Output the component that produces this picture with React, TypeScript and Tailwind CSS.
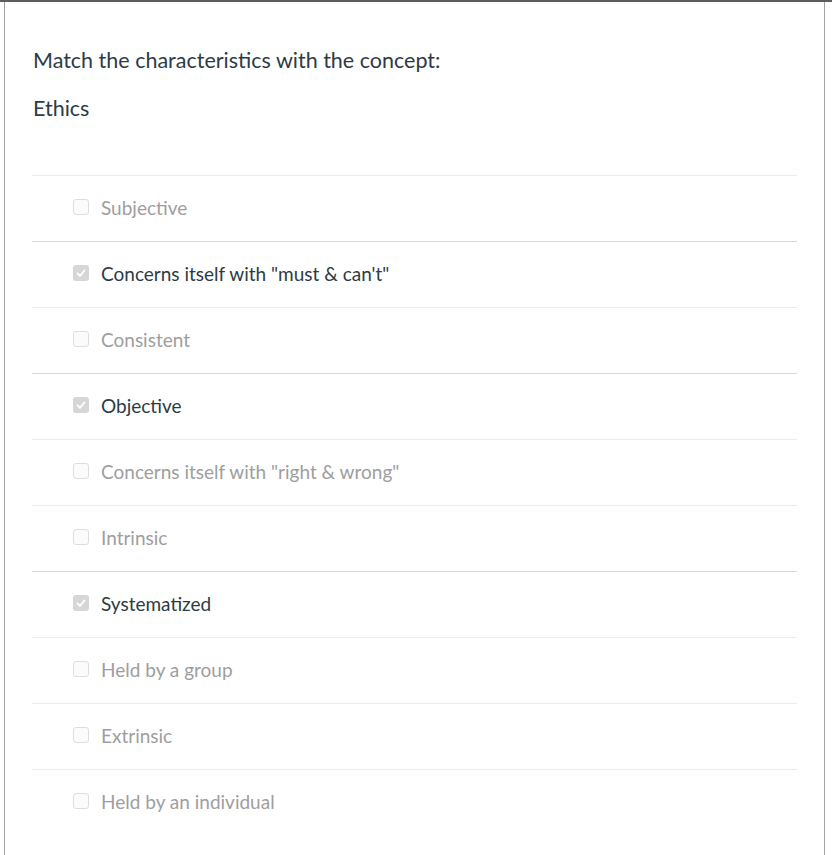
import React from "react";

const items: { label: string; checked: boolean }[] = [
  { label: "Subjective", checked: false },
  { label: 'Concerns itself with "must & can\'t"', checked: true },
  { label: "Consistent", checked: false },
  { label: "Objective", checked: true },
  { label: 'Concerns itself with "right & wrong"', checked: false },
  { label: "Intrinsic", checked: false },
  { label: "Systematized", checked: true },
  { label: "Held by a group", checked: false },
  { label: "Extrinsic", checked: false },
  { label: "Held by an individual", checked: false },
];

function Box({ checked }: { checked: boolean }) {
  if (checked) {
    return (
      <span className="flex h-[16px] w-[16px] items-center justify-center rounded-[3px] bg-[#d6d6d6]">
        <svg width="12" height="12" viewBox="0 0 12 12" fill="none">
          <path d="M2.5 6.3 L5 8.8 L9.6 3.4" stroke="#ffffff" strokeWidth="1.8" strokeLinecap="round" strokeLinejoin="round" />
        </svg>
      </span>
    );
  }
  return <span className="block h-[16px] w-[16px] rounded-[3px] border border-[#dedede] bg-[#fbfbfb]" />;
}

export default function App() {
  return (
    <div className="min-h-[855px] bg-white" style={{ fontFamily: "Lato, 'Noto Sans', sans-serif" }}>
      <div className="h-[2px] w-full bg-[#5e5e61]" />
      <div className="ml-[4px] min-h-[853px] w-[821px] border-x border-[#a3a3a3] px-[27px]">
        <p className="pl-[1px] pt-[42px] text-[21.5px] leading-[33px] text-[#2d3b45]">
          Match the characteristics with the concept:
        </p>
        <p className="mt-[15px] pl-[1px] text-[21.5px] leading-[33px] text-[#2d3b45]">Ethics</p>
        <ul className="mt-[50px]">
          {items.map((it, i) => (
            <li
              key={i}
              className={
                "flex h-[66px] items-center border-t " +
                (it.checked ? "border-[#d8d8d8]" : "border-[#ececec]")
              }
            >
              <span className="ml-[41px] mt-[-3px]">
                <Box checked={it.checked} />
              </span>
              <span
                className={
                  "ml-[12px] mt-[-1px] text-[19px] leading-[26px] " +
                  (it.checked ? "text-[#2d3b45]" : "text-[#9e9e9e]")
                }
              >
                {it.label}
              </span>
            </li>
          ))}
        </ul>
      </div>
    </div>
  );
}
